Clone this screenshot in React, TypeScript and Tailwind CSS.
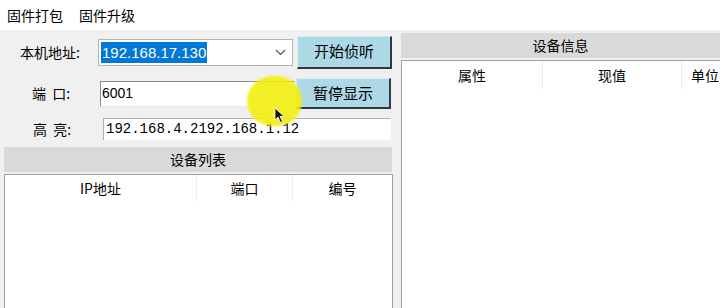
import React from "react";

const cjk = { fontFamily: '"Noto Sans CJK SC", "Liberation Sans", sans-serif' };

function Btn({ label, h }: { label: string; h: string }) {
  return (
    <div
      className={`w-[95px] ${h} flex items-center justify-center bg-[#add8e6] border-t border-l border-t-[#d6ecf3] border-l-[#d6ecf3] border-r-2 border-b-2 border-r-[#2d3a40] border-b-[#2d3a40] text-[15px] text-black`}
      style={cjk}
    >
      {label}
    </div>
  );
}

export default function App() {
  return (
    <div className="relative w-[720px] h-[308px] overflow-hidden bg-[#f0f0f0] text-black" style={cjk}>
      {/* menu */}
      <div className="h-[30px] bg-white flex items-center pl-[7px] gap-[16px] text-[14px]">
        <span>固件打包</span>
        <span>固件升级</span>
      </div>
      <div className="flex h-[278px]">
        {/* left column */}
        <div className="w-[401px] shrink-0 flex flex-col">
          {/* row 1 */}
          <div className="flex items-center h-[34px] mt-[5px]">
            <div className="ml-[20px] w-[78px] text-[14px]">本机地址:</div>
            <div className="w-[195px] h-[27px] bg-white border border-[#b4b4b4] flex items-center pl-[2px] pr-[6px]">
              <span
                className="bg-[#0078d7] text-white text-[15px] leading-[21px] px-[1px]"
                style={{ fontFamily: '"Liberation Sans", Arial, sans-serif' }}
              >
                192.168.17.130
              </span>
              <div className="flex-1" />
              <svg width="11" height="7" viewBox="0 0 11 7">
                <path d="M1 1 L5.5 5.5 L10 1" fill="none" stroke="#555" strokeWidth="1.2" />
              </svg>
            </div>
            <div className="ml-[4px]">
              <Btn label="开始侦听" h="h-[33px]" />
            </div>
          </div>
          {/* row 2 */}
          <div className="flex items-center h-[31px] mt-[9px]">
            <div className="ml-[32px] w-[68px] text-[14px]">端&nbsp;&nbsp;口:</div>
            <div
              className="w-[195px] h-[26px] bg-white border-t border-l border-[#8a8a8a] border-r border-b border-r-[#e8e8e8] border-b-[#e8e8e8] flex items-center pl-[1px] text-[14px]"
              style={{ fontFamily: '"Liberation Sans", Arial, sans-serif' }}
            >
              6001
            </div>
            <div className="ml-[1px]">
              <Btn label="暂停显示" h="h-[31px]" />
            </div>
          </div>
          {/* row 3 */}
          <div className="flex items-center h-[22px] mt-[9px]">
            <div className="ml-[33px] w-[70px] text-[14px]">高&nbsp;&nbsp;亮:</div>
            <div
              className="w-[288px] h-[22px] bg-white border-l border-t border-[#b0b0b0] flex items-center pl-[2px] text-[14px]"
              style={{ fontFamily: '"Liberation Mono", monospace' }}
            >
              192.168.4.2192.168.1.12
            </div>
          </div>
          {/* section header */}
          <div className="mt-[7px] ml-[4px] w-[388px] h-[25px] bg-[#d9d9d9] flex items-center justify-center text-[14px]">
            设备列表
          </div>
          {/* table */}
          <div className="mt-[2px] ml-[4px] w-[389px] flex-1 bg-white border border-[#a0a0a0] border-b-0">
            <div className="flex h-[26px] text-[14px]">
              <div className="w-[192px] flex items-center justify-center border-r border-[#ececec]">IP地址</div>
              <div className="w-[96px] flex items-center justify-center border-r border-[#ececec]">端口</div>
              <div className="flex-1 flex items-center justify-center">编号</div>
            </div>
          </div>
        </div>
        {/* right panel */}
        <div className="flex-1 min-w-0 overflow-hidden flex flex-col pt-[3px]">
          <div className="h-[25px] bg-[#d9d9d9] flex items-center justify-center text-[14px]">设备信息</div>
          <div className="mt-[2px] flex-1 bg-white border-l border-t border-[#a0a0a0]">
            <div className="flex h-[28px] text-[14px] whitespace-nowrap">
              <div className="w-[141px] shrink-0 flex items-center justify-center border-r border-[#ececec]">属性</div>
              <div className="w-[139px] shrink-0 flex items-center justify-center border-r border-[#ececec]">现值</div>
              <div className="w-[46px] shrink-0 flex items-center justify-center">单位</div>
            </div>
          </div>
        </div>
      </div>
      {/* highlight circle + cursor overlay */}
      <div className="absolute left-[247px] top-[76px] w-[55px] h-[50px] rounded-full bg-[#f3ef10] opacity-90 blur-[1px]" />
      <svg className="absolute left-[274px] top-[107px]" width="12" height="17" viewBox="0 0 12 17">
        <path d="M1 1 L1 13 L4 10 L6.5 15.5 L8.5 14.5 L6 9.5 L10 9.5 Z" fill="#111" stroke="#fff" strokeWidth="0.8" />
      </svg>
    </div>
  );
}
